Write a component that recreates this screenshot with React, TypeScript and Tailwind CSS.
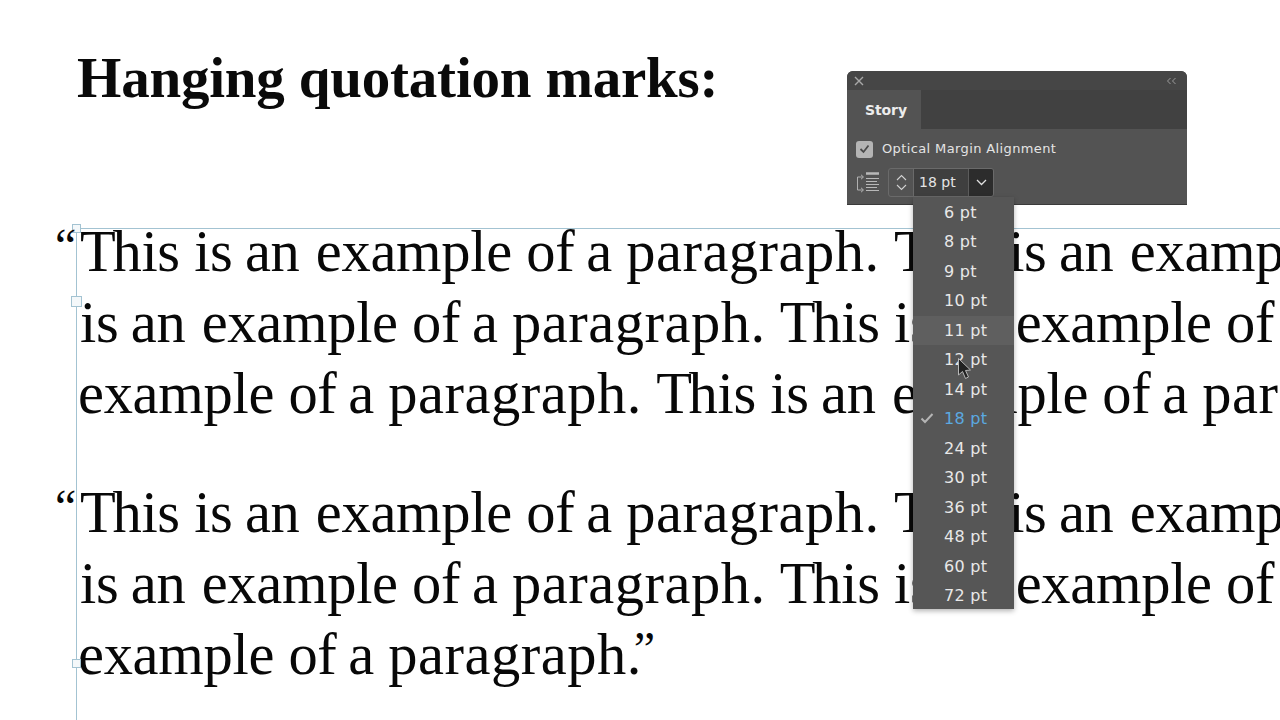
import React from "react";

const serif = "font-['Liberation_Serif',serif]";
const ui = "font-['DejaVu_Sans',sans-serif]";

function Line({ children, indent }: { children: React.ReactNode; indent: string }) {
  return (
    <div className={`h-[71px] leading-[71px] whitespace-nowrap text-[58.5px] text-[#080808] tracking-[-0.3px] ${indent}`}>
      {children}
    </div>
  );
}

const This = () => (
  <>
    <span className="tracking-[-3.3px]">T</span>his
  </>
);
const Is = () => <span className="mr-[-2px]">is</span>;
const An = () => <span className="mr-[2px]">an</span>;
const A = () => <span className="ml-[-2.5px]">a</span>;
const Paragraph = () => <span className="tracking-[0.5px]">paragraph.</span>;

const IsAnExample = () => (
  <>
    <Is /> <An /> example of <A /> <Paragraph />
  </>
);

function Handle({ className }: { className: string }) {
  return <div className={`absolute bg-[#f4f8fa] border border-[#a3c3d2] ${className}`} />;
}

const sizes = ["6 pt", "8 pt", "9 pt", "10 pt", "11 pt", "12 pt", "14 pt", "18 pt", "24 pt", "30 pt", "36 pt", "48 pt", "60 pt", "72 pt"];

function Dropdown() {
  return (
    <div className={`absolute left-[913px] top-[197px] w-[101px] h-[412px] bg-[#565656] pt-[0.5px] shadow-[0_2px_5px_rgba(0,0,0,0.3)] ${ui}`}>
      {sizes.map((s) => (
        <div
          key={s}
          className={`relative h-[29.5px] leading-[29.5px] pl-[31px] text-[16px] tracking-[0.3px] ${
            s === "18 pt" ? "text-[#5ba9e0]" : "text-[#e8e8e8]"
          } ${s === "11 pt" ? "bg-[#5f5f5f]" : ""}`}
        >
          {s}
          {s === "18 pt" && (
            <svg className="absolute left-[7px] top-[8px]" width="14" height="12" viewBox="0 0 14 12" fill="none">
              <path d="M1.5 6.5 L5 10 L12.5 2" stroke="#b5b5b5" strokeWidth="2" />
            </svg>
          )}
        </div>
      ))}
      <svg className="absolute left-[44px] top-[160px]" width="16" height="24" viewBox="0 0 16 24">
        <path d="M1.5 1.5 L1.5 18 L5.5 14.5 L8.5 21.5 L11.5 20 L8.5 13.5 L13.5 13 Z" fill="#222" stroke="#b8b8b8" strokeWidth="1" />
      </svg>
    </div>
  );
}

function StoryPanel() {
  return (
    <div className={`absolute left-[847px] top-[71px] w-[340px] h-[134px] rounded-t-[6px] bg-[#535353] border-b border-[#3a3a3a] overflow-hidden flex flex-col ${ui}`}>
      <div className="h-[19px] bg-[#464646] flex items-center justify-between pl-[7px] pr-[10px] shrink-0">
        <svg width="10" height="10" viewBox="0 0 10 10" fill="none">
          <path d="M1 1 L9 9 M9 1 L1 9" stroke="#a8a8a8" strokeWidth="1.4" />
        </svg>
        <svg width="11" height="8" viewBox="0 0 11 8" fill="none">
          <path d="M4.5 1 L1.5 4 L4.5 7 M9.5 1 L6.5 4 L9.5 7" stroke="#9a9a9a" strokeWidth="1" />
        </svg>
      </div>
      <div className="h-[39px] bg-[#414141] flex shrink-0">
        <div className="w-[74px] bg-[#535353] text-[#ececec] text-[14px] font-bold leading-[41px] pl-[18px] tracking-[-0.1px]">Story</div>
      </div>
      <div className="flex items-center pl-[9px] pt-[11px]">
        <div className="w-[17px] h-[17px] rounded-[3px] bg-[#b4b4b4] flex items-center justify-center">
          <svg width="11" height="10" viewBox="0 0 11 10" fill="none">
            <path d="M1.5 5 L4.5 8 L9.5 1.5" stroke="#4a4a4a" strokeWidth="1.8" />
          </svg>
        </div>
        <span className="ml-[9px] text-[13px] leading-[18px] text-[#e4e4e4] whitespace-nowrap tracking-[0.38px]">Optical Margin Alignment</span>
      </div>
      <div className="flex items-center pl-[9px] mt-[10px]">
        <svg width="24" height="22" viewBox="0 0 24 22" fill="none">
          <path d="M1.5 5 V18 M1.5 5 H7 M5 2.8 L7.5 5 L5 7.2 M1.5 18 H7 M5 15.8 L7.5 18 L5 20.2" stroke="#b0b0b0" strokeWidth="1" />
          <path d="M10 1.5 H23" stroke="#b8b8b8" strokeWidth="2.5" />
          <path d="M10 6.5 H23 M10 9.5 H21 M10 12.5 H23 M10 15.5 H21 M10 18.5 H23" stroke="#b8b8b8" strokeWidth="1" />
        </svg>
        <div className="ml-[8px] flex h-[29px] rounded-[3px] border border-[#6a6a6a] overflow-hidden">
          <div className="w-[25px] flex flex-col items-center justify-center gap-[3px] border-r border-[#6a6a6a]">
            <svg width="11" height="7" viewBox="0 0 11 7" fill="none"><path d="M1 6 L5.5 1.5 L10 6" stroke="#d0d0d0" strokeWidth="1.1" /></svg>
            <svg width="11" height="7" viewBox="0 0 11 7" fill="none"><path d="M1 1 L5.5 5.5 L10 1" stroke="#d0d0d0" strokeWidth="1.1" /></svg>
          </div>
          <div className="w-[55px] bg-[#3f3f3f] border-r border-[#5c5c5c] text-[#e4e4e4] text-[14px] leading-[27px] pl-[5px] whitespace-nowrap">18 pt</div>
          <div className="w-[24px] bg-[#2c2c2c] flex items-center justify-center">
            <svg width="11" height="7" viewBox="0 0 11 7" fill="none"><path d="M1 1 L5.5 5.5 L10 1" stroke="#e0e0e0" strokeWidth="1.3" /></svg>
          </div>
        </div>
      </div>
    </div>
  );
}

export default function App() {
  return (
    <div className={`relative w-[1280px] h-[720px] overflow-hidden bg-white ${serif}`}>
      <h1 className="pl-[77px] pt-[46px] h-[228px] text-[57px] leading-[64px] font-bold text-[#0a0a0a] tracking-[-0.2px] whitespace-nowrap">
        Hanging quotation marks:
      </h1>
      <div className="relative ml-[76px] h-[492px] border-l border-t border-[#a3c3d2]">
        <Handle className="left-[-5px] top-[-5px] w-[9px] h-[9px]" />
        <Handle className="left-[-6px] top-[67px] w-[11px] h-[11px]" />
        <Handle className="left-[-5px] top-[430px] w-[9px] h-[9px]" />
        <span className="absolute left-[-22px] top-[-19px] text-[48px] leading-[71px] text-[#080808]">“</span>
        <span className="absolute left-[-22px] top-[242px] text-[48px] leading-[71px] text-[#080808]">“</span>
        <div className="-mt-[13px]">
          <div className="h-[261px]">
            <Line indent="pl-[3px]"><This /> <IsAnExample /> <This /> <IsAnExample /></Line>
            <Line indent="pl-[3px]"><IsAnExample /> <This /> <IsAnExample /></Line>
            <Line indent="pl-[1px]">example of <A /> <Paragraph /> <This /> <IsAnExample /></Line>
          </div>
          <Line indent="pl-[3px]"><This /> <IsAnExample /> <This /> <IsAnExample /></Line>
          <Line indent="pl-[3px]"><IsAnExample /> <This /> <IsAnExample /></Line>
          <Line indent="pl-[1px]">example of <A /> <Paragraph /><span className="relative -top-[9px] ml-[-8px] text-[48px]">”</span></Line>
        </div>
      </div>
      <StoryPanel />
      <Dropdown />
    </div>
  );
}
